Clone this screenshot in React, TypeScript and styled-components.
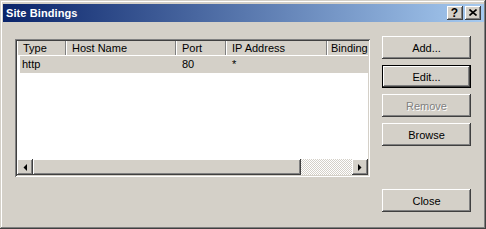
import React from "react";
import styled, { createGlobalStyle, css } from "styled-components";

const Global = createGlobalStyle`
  html, body { margin: 0; padding: 0; background: #D4D0C8; }
  body { font-family: "Liberation Sans", Arial, sans-serif; font-size: 11px; color: #000; }
  * { box-sizing: border-box; }
`;

const raised = css`
  box-shadow: inset -1px -1px #404040, inset 1px 1px #ffffff, inset -2px -2px #808080, inset 2px 2px #d4d0c8;
`;

const Window = styled.div`
  width: 486px;
  height: 229px;
  background: #d4d0c8;
  padding: 4px 2px 2px 3px;
  display: flex;
  flex-direction: column;
  box-shadow: inset -1px -1px #404040, inset 1px 1px #d4d0c8, inset -2px -2px #808080, inset 2px 2px #ffffff;
`;

const TitleBar = styled.div`
  height: 18px;
  display: flex;
  align-items: center;
  padding-left: 3px;
  background: linear-gradient(to right, #0a246a, #a6caf0);
`;

const TitleText = styled.div`
  color: #fff;
  font-weight: bold;
  font-size: 11px;
  letter-spacing: 0.1px;
`;

const TitleButtons = styled.div`
  margin-left: auto;
  display: flex;
  gap: 2px;
  padding-right: 3px;
`;

const TitleButton = styled.div`
  width: 16px;
  height: 14px;
  background: #d4d0c8;
  ${raised};
  display: flex;
  align-items: center;
  justify-content: center;
  font-weight: bold;
  font-size: 12px;
  line-height: 14px;
  padding: 0 1px 1px 0;
`;

const Body = styled.div`
  flex: 1;
  display: flex;
  flex-direction: column;
  padding: 14px 13px 0 12px;
`;

const TopRow = styled.div`
  display: flex;
  gap: 12px;
`;

const ListView = styled.div`
  margin-top: 3px;
  width: 355px;
  height: 138px;
  padding: 2px;
  background: #fff;
  display: flex;
  flex-direction: column;
  overflow: hidden;
  box-shadow: inset 1px 1px #808080, inset -1px -1px #ffffff, inset 2px 2px #404040, inset -2px -2px #d4d0c8;
`;

const Clip = styled.div`
  flex: 1;
  overflow: hidden;
  display: flex;
  flex-direction: column;
`;

const HeaderRow = styled.div`
  display: flex;
  height: 14px;
  background: #d4d0c8;
  flex-shrink: 0;
`;

const HeaderCell = styled.div<{ $w?: number }>`
  ${(p) => (p.$w ? `width: ${p.$w}px; flex-shrink: 0; padding-left: 6px;` : "flex: 1; padding-left: 4px;")}
  height: 14px;
  line-height: 14px;
  white-space: nowrap;
  box-shadow: ${(p) => (p.$w ? "inset -1px 0 #808080, inset 1px 0 #ffffff" : "inset 1px 0 #ffffff")};
`;

const Row = styled.div`
  display: flex;
  height: 17px;
  margin-top: 1px;
  margin-left: 3px;
  background: #d4d0c8;
  flex-shrink: 0;
`;

const Cell = styled.div<{ $w?: number; $first?: boolean }>`
  ${(p) => (p.$w ? `width: ${p.$w}px; flex-shrink: 0;` : "flex: 1;")}
  line-height: 17px;
  padding-left: ${(p) => (p.$first ? 2 : 6)}px;
  white-space: nowrap;
`;

const Spacer = styled.div`
  flex: 1;
`;

const HScroll = styled.div`
  height: 16px;
  display: flex;
  flex-shrink: 0;
`;

const ScrollArrow = styled.div`
  width: 16px;
  height: 16px;
  background: #d4d0c8;
  ${raised};
  display: flex;
  align-items: center;
  justify-content: center;
`;

const Thumb = styled.div`
  width: 268px;
  height: 16px;
  background: #d4d0c8;
  ${raised};
`;

const Track = styled.div`
  flex: 1;
  background-color: #d4d0c8;
  background-image: repeating-conic-gradient(#ffffff 0 25%, #d4d0c8 0 50%);
  background-size: 2px 2px;
`;

const ButtonColumn = styled.div`
  width: 89px;
  display: flex;
  flex-direction: column;
  gap: 6px;
`;

const Button = styled.div<{ $default?: boolean; $disabled?: boolean }>`
  width: 89px;
  height: 23px;
  background: #d4d0c8;
  display: flex;
  align-items: center;
  justify-content: center;
  font-size: 11px;
  color: ${(p) => (p.$disabled ? "#808080" : "#000")};
  text-shadow: ${(p) => (p.$disabled ? "1px 1px #ffffff" : "none")};
  ${(p) =>
    p.$default
      ? css`
          box-shadow: inset 0 0 0 1px #000, inset -2px -2px #404040, inset 2px 2px #ffffff, inset -3px -3px #808080;
        `
      : raised};
`;

const Footer = styled.div`
  display: flex;
  justify-content: flex-end;
  margin-top: 12px;
`;

const columns = [49, 110, 50, 101];
const headers = ["Type", "Host Name", "Port", "IP Address"];

const LeftArrow = () => (
  <svg width="4" height="7" viewBox="0 0 4 7">
    <path d="M4 0 L4 7 L0.5 3.5 Z" fill="#000" />
  </svg>
);
const RightArrow = () => (
  <svg width="4" height="7" viewBox="0 0 4 7">
    <path d="M0 0 L0 7 L3.5 3.5 Z" fill="#000" />
  </svg>
);
const CloseGlyph = () => (
  <svg width="8" height="7" viewBox="0 0 8 7">
    <path d="M0.5 0.5 L7.5 6.5 M7.5 0.5 L0.5 6.5" stroke="#000" strokeWidth="1.6" />
  </svg>
);

export default function App() {
  return (
    <>
      <Global />
      <Window>
        <TitleBar>
          <TitleText>Site Bindings</TitleText>
          <TitleButtons>
            <TitleButton>?</TitleButton>
            <TitleButton>
              <CloseGlyph />
            </TitleButton>
          </TitleButtons>
        </TitleBar>
        <Body>
          <TopRow>
            <ListView>
              <Clip>
                <HeaderRow>
                  {headers.map((h, i) => (
                    <HeaderCell key={h} $w={columns[i]}>
                      {h}
                    </HeaderCell>
                  ))}
                  <HeaderCell>Binding</HeaderCell>
                </HeaderRow>
                <Row>
                  <Cell $w={columns[0] - 3} $first>
                    http
                  </Cell>
                  <Cell $w={columns[1]}></Cell>
                  <Cell $w={columns[2]}>80</Cell>
                  <Cell $w={columns[3]}>*</Cell>
                  <Cell></Cell>
                </Row>
                <Spacer />
              </Clip>
              <HScroll>
                <ScrollArrow>
                  <LeftArrow />
                </ScrollArrow>
                <Thumb />
                <Track />
                <ScrollArrow>
                  <RightArrow />
                </ScrollArrow>
              </HScroll>
            </ListView>
            <ButtonColumn>
              <Button>Add...</Button>
              <Button $default>Edit...</Button>
              <Button $disabled>Remove</Button>
              <Button>Browse</Button>
            </ButtonColumn>
          </TopRow>
          <Footer>
            <Button>Close</Button>
          </Footer>
        </Body>
      </Window>
    </>
  );
}
